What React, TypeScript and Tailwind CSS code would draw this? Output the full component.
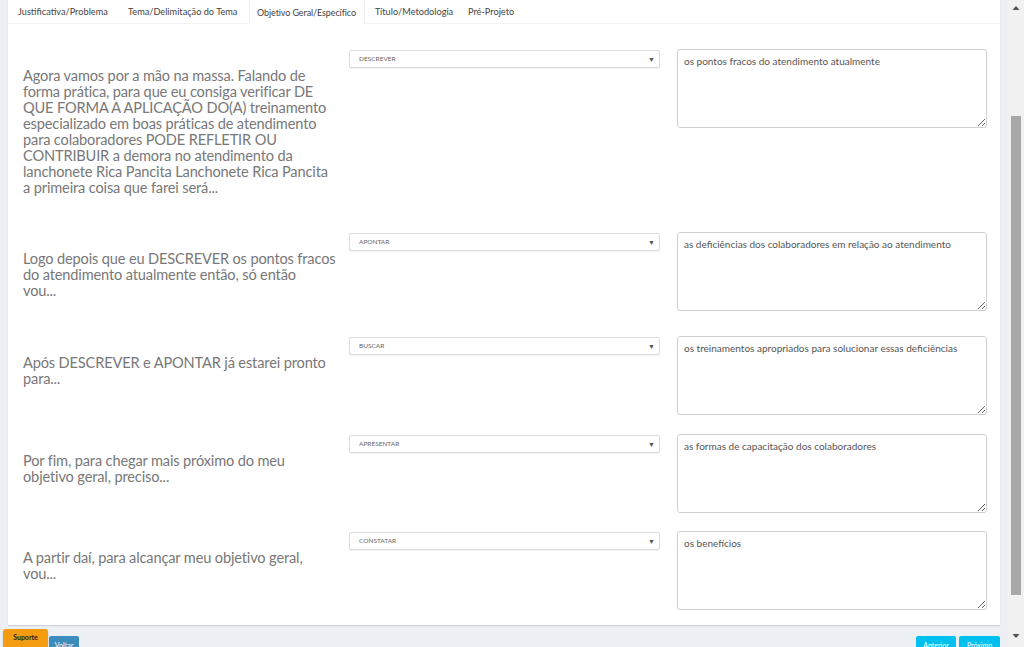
import React from "react";

const rows = [
  {
    lines: [
      "Agora vamos por a mão na massa. Falando de",
      "forma prática, para que eu consiga verificar DE",
      "QUE FORMA A APLICAÇÃO DO(A) treinamento",
      "especializado em boas práticas de atendimento",
      "para colaboradores PODE REFLETIR OU",
      "CONTRIBUIR a demora no atendimento da",
      "lanchonete Rica Pancita Lanchonete Rica Pancita",
      "a primeira coisa que farei será...",
    ],
    sel: "DESCREVER",
    val: "os pontos fracos do atendimento atualmente",
    h: "h-[183px]",
  },
  {
    lines: [
      "Logo depois que eu DESCREVER os pontos fracos",
      "do atendimento atualmente então, só então",
      "vou...",
    ],
    sel: "APONTAR",
    val: "as deficiências dos colaboradores em relação ao atendimento",
    h: "h-[104px]",
  },
  {
    lines: ["Após DESCREVER e APONTAR já estarei pronto", "para..."],
    sel: "BUSCAR",
    val: "os treinamentos apropriados para solucionar essas deficiências",
    h: "h-[98px]",
  },
  {
    lines: ["Por fim, para chegar mais próximo do meu", "objetivo geral, preciso..."],
    sel: "APRESENTAR",
    val: "as formas de capacitação dos colaboradores",
    h: "h-[97px]",
  },
  {
    lines: ["A partir daí, para alcançar meu objetivo geral,", "vou..."],
    sel: "CONSTATAR",
    val: "os benefícios",
    h: "h-[92px]",
  },
];

const tabs = [
  { t: "Justificativa/Problema", w: "w-[110px]" },
  { t: "Tema/Delimitação do Tema", w: "w-[131px]" },
  { t: "Objetivo Geral/Específico", w: "w-[116px]" },
  { t: "Título/Metodologia", w: "w-[93px]" },
  { t: "Pré-Projeto", w: "w-[70px]" },
];

export default function App() {
  return (
    <div
      className="flex h-[647px] w-[1024px] overflow-hidden bg-[#ecf0f5]"
      style={{ fontFamily: "Lato, 'Noto Sans', sans-serif" }}
    >
      <div className="relative flex w-[1008px] flex-col">
        <div className="ml-[8px] flex h-[625px] w-[992px] flex-col bg-white shadow-[0_1px_1px_rgba(0,0,0,0.12)]">
          <div className="flex h-[24px] border-b border-[#f4f4f4]">
            {tabs.map((tab, i) => (
              <div
                key={tab.t}
                className={
                  i === 2
                    ? `mb-[-1px] flex h-[25px] shrink-0 items-center whitespace-nowrap border-x border-[#f0f0f0] bg-white pl-[7px] text-[9px] tracking-[-0.1px] text-[#444] ${tab.w}`
                    : `flex h-[24px] shrink-0 items-center whitespace-nowrap pl-[10px] text-[9.2px] text-[#444] ${tab.w}`
                }
              >
                {tab.t}
              </div>
            ))}
          </div>
          <div className="flex flex-col pt-[25px]">
            {rows.map((r) => (
              <div key={r.sel} className={`flex items-start ${r.h}`}>
                <div className="w-[341px] shrink-0 whitespace-nowrap pl-[15px] pt-[19px] text-[14.6px] leading-[16px] text-[#787878] tracking-[-0.15px]">
                  {r.lines.map((l, i) => (
                    <div key={i}>{l}</div>
                  ))}
                </div>
                <div className="mt-[1px] flex h-[18px] w-[311px] shrink-0 items-center justify-between rounded-[2px] border border-[#dcdcdc] bg-white pl-[9px] pr-[4px] shadow-[0_1px_1px_rgba(0,0,0,0.06)]">
                  <span className="text-[6.5px] text-[#666]">{r.sel}</span>
                  <span className="text-[7px] leading-none text-[#555]">▼</span>
                </div>
                <textarea
                  readOnly
                  defaultValue={r.val}
                  className="ml-[17px] h-[79px] w-[310px] shrink-0 rounded-[3px] border border-[#d0d0d0] bg-white px-[6px] py-[4px] text-[10px] leading-[14px] text-[#555] outline-none"
                  style={{ resize: "both", fontFamily: "Lato, 'Noto Sans', sans-serif" }}
                />
              </div>
            ))}
          </div>
        </div>
        <div className="absolute left-[3px] top-[629px] flex h-[22px] w-[45px] justify-center rounded-t-[3px] bg-[#f39c12] pt-[3px] text-[7px] font-bold text-[#222] shadow-[0_1px_2px_rgba(0,0,0,0.2)]">
          Suporte
        </div>
        <div className="absolute left-[49px] top-[636px] flex h-[16px] w-[30px] justify-center rounded-[2px] bg-[#3c8dbc] pt-[4px] text-[7px] text-white">
          Voltar
        </div>
        <div className="absolute left-[916px] top-[636px] flex h-[16px] w-[40px] justify-center rounded-[2px] bg-[#00c0ef] pt-[4px] text-[7px] text-white">
          Anterior
        </div>
        <div className="absolute left-[959px] top-[636px] flex h-[16px] w-[41px] justify-center rounded-[2px] bg-[#00c0ef] pt-[4px] text-[7px] text-white">
          Próximo
        </div>
      </div>
      <div className="relative flex w-[16px] flex-col items-center bg-[#f1f1f1]">
        <svg width="8" height="6" viewBox="0 0 8 6" className="mt-[5px]">
          <path d="M0.5 5 L4 1 L7.5 5 Z" fill="#505050" />
        </svg>
        <div className="mt-[105px] h-[479px] w-[10px] bg-[#a8a8a8]" />
        <svg width="8" height="6" viewBox="0 0 8 6" className="mt-[38px]">
          <path d="M0.5 1 L4 5 L7.5 1 Z" fill="#505050" />
        </svg>
      </div>
    </div>
  );
}
